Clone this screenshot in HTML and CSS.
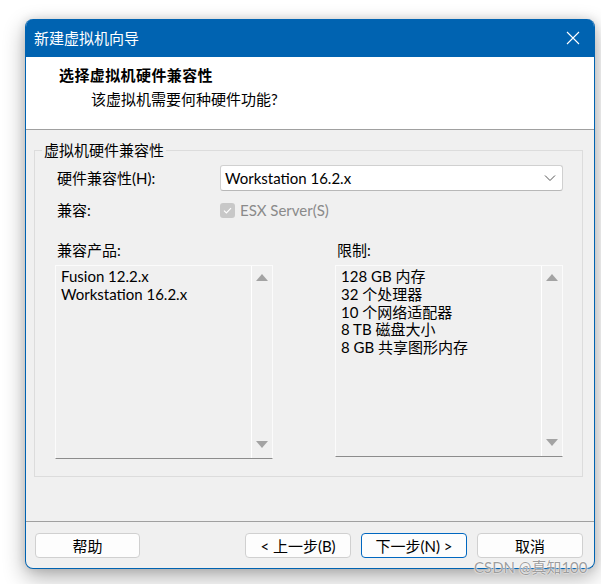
FILE: index.html
```html
<!DOCTYPE html>
<html lang="zh-CN">
<head>
<meta charset="utf-8">
<title>新建虚拟机向导</title>
<link rel="stylesheet" href="styles.css">
</head>
<body>
<div class="window">
  <div class="titlebar">
    <span class="title">新建虚拟机向导</span>
    <svg class="close" width="14" height="14" viewBox="0 0 14 14"><path d="M1 1 L13 13 M13 1 L1 13" stroke="#fff" stroke-width="1.1" fill="none"/></svg>
  </div>
  <div class="header">
    <div class="h-title">选择虚拟机硬件兼容性</div>
    <div class="h-sub">该虚拟机需要何种硬件功能?</div>
  </div>
  <div class="body">
    <fieldset class="group">
      <legend>虚拟机硬件兼容性</legend>
      <div class="row row-first">
        <span class="label">硬件兼容性(H):</span>
        <div class="combo">
          <span>Workstation 16.2.x</span>
          <svg width="12" height="8" viewBox="0 0 12 8"><path d="M1 1.5 L6 6.5 L11 1.5" stroke="#555" stroke-width="1" fill="none"/></svg>
        </div>
      </div>
      <div class="row row-second">
        <span class="label">兼容:</span>
        <div class="check">
          <span class="box"><svg width="15" height="15" viewBox="0 0 15 15"><path d="M4 7.6 L6.4 10 L11 5.2" stroke="#fff" stroke-width="1.2" fill="none"/></svg></span>
          <span class="check-text">ESX Server(S)</span>
        </div>
      </div>
      <div class="lists">
        <div class="col">
          <div class="lbl">兼容产品:</div>
          <div class="listbox lb-left">
            <div class="items">
              <div>Fusion 12.2.x</div>
              <div>Workstation 16.2.x</div>
            </div>
            <div class="scroll"><span class="up"></span><span class="down"></span></div>
          </div>
        </div>
        <div class="col">
          <div class="lbl">限制:</div>
          <div class="listbox lb-right">
            <div class="items">
              <div>128 GB 内存</div>
              <div>32 个处理器</div>
              <div>10 个网络适配器</div>
              <div>8 TB 磁盘大小</div>
              <div>8 GB 共享图形内存</div>
            </div>
            <div class="scroll"><span class="up"></span><span class="down"></span></div>
          </div>
        </div>
      </div>
    </fieldset>
  </div>
  <div class="footer">
    <button class="btn btn-help">帮助</button>
    <div class="spacer"></div>
    <button class="btn">&lt; 上一步(B)</button>
    <button class="btn btn-primary">下一步(N) &gt;</button>
    <button class="btn">取消</button>
  </div>
</div>
<div class="watermark">CSDN @真知100</div>
</body>
</html>
```
FILE: styles.css
```css
* { box-sizing: border-box; }
html, body { margin: 0; padding: 0; }
body {
  width: 601px;
  height: 584px;
  background: #ffffff;
  font-family: "Segoe UI", Lato, "Noto Sans CJK SC", sans-serif;
  font-size: 15px;
  color: #000;
  position: relative;
  overflow: hidden;
}
.window {
  margin: 19px 0 0 25px;
  width: 570px;
  height: 550px;
  border: 1px solid #0063b1;
  border-top: none;
  border-radius: 8px;
  overflow: hidden;
  display: flex;
  flex-direction: column;
  background: #f0f0f0;
  box-shadow: 0 8px 22px rgba(0,0,0,0.32), 0 0 10px rgba(0,0,0,0.12);
}
.titlebar {
  height: 38px;
  flex: none;
  background: #0063b1;
  color: #fff;
  display: flex;
  align-items: center;
  justify-content: space-between;
  padding: 0 15px 0 9px;
  margin: 0 -1px;
}
.title { font-size: 15px; line-height: 20px; }
.close { display: block; }
.header {
  height: 73px;
  flex: none;
  background: #fff;
  border-bottom: 1px solid #a0a0a0;
  padding: 8px 0 0 33px;
}
.h-title { font-weight: bold; line-height: 20px; letter-spacing: 0.4px; }
.h-sub { padding-left: 32px; line-height: 20px; margin-top: 4px; }
.body {
  flex: 1;
  padding: 10px 11px 0 8px;
}
.group {
  margin: 0;
  padding: 0 19px 17px 20px;
  border: 1px solid #dcdcdc;
  min-width: 0;
}
.group legend {
  padding: 0 2px;
  margin-left: -13px;
  line-height: 20px;
}
.row { display: flex; align-items: center; }
.row-first { margin-top: 5px; height: 26px; }
.row-second { margin-top: 8px; height: 22px; }
.label { width: 165px; flex: none; padding-left: 2px; line-height: 20px; }
.combo {
  flex: 1;
  height: 26px;
  background: #fff;
  border: 1px solid #d0d0d0;
  border-bottom-color: #b8b8b8;
  border-radius: 3px;
  display: flex;
  align-items: center;
  justify-content: space-between;
  padding: 0 6px 0 4px;
}
.combo svg { display: block; }
.check { display: flex; align-items: center; }
.box {
  width: 15px;
  height: 15px;
  background: #c8c8c8;
  border-radius: 3px;
  margin-right: 5px;
  display: block;
}
.box svg { display: block; }
.check-text { color: #8a8a8a; line-height: 20px; }
.lists {
  display: grid;
  grid-template-columns: 218px 1fr;
  column-gap: 62px;
  margin-top: 19px;
}
.lbl { line-height: 20px; padding-left: 2px; }
.listbox {
  margin-top: 5px;
  display: flex;
  border: 1px solid #fbfbfb;
  border-bottom-color: #8c8c8c;
  background: #f0f0f0;
}
.lb-left { height: 194px; }
.lb-right { height: 192px; }
.items {
  flex: 1;
  padding: 2px 5px;
  line-height: 17.8px;
}
.scroll {
  width: 21px;
  flex: none;
  border-left: 1px solid #fff;
  display: flex;
  flex-direction: column;
  justify-content: space-between;
  align-items: center;
  padding: 8px 0 10px;
}
.up, .down {
  width: 0;
  height: 0;
  border-left: 6px solid transparent;
  border-right: 6px solid transparent;
  display: block;
}
.up { border-bottom: 7px solid #a3a3a3; }
.down { border-top: 7px solid #a3a3a3; }
.footer {
  height: 47px;
  flex: none;
  border-top: 1px solid #a0a0a0;
  padding: 11px 11px 0 9px;
  display: flex;
  align-items: flex-start;
  gap: 10px;
}
.spacer { flex: 1; }
.btn {
  width: 106px;
  height: 25px;
  background: #fdfdfd;
  border: 1px solid #d0d0d0;
  border-radius: 4px;
  font-family: inherit;
  font-size: 15px;
  color: #000;
  padding: 0;
  line-height: 20px;
}
.btn-help { width: 105px; }
.btn-primary { border-color: #0067c0; }
.watermark {
  position: absolute;
  left: 474px;
  top: 557px;
  font-size: 15px;
  color: rgba(140,140,140,0.85);
  text-shadow: 0 0 2px #fff, 0 0 1px #fff;
  line-height: 20px;
}
```
